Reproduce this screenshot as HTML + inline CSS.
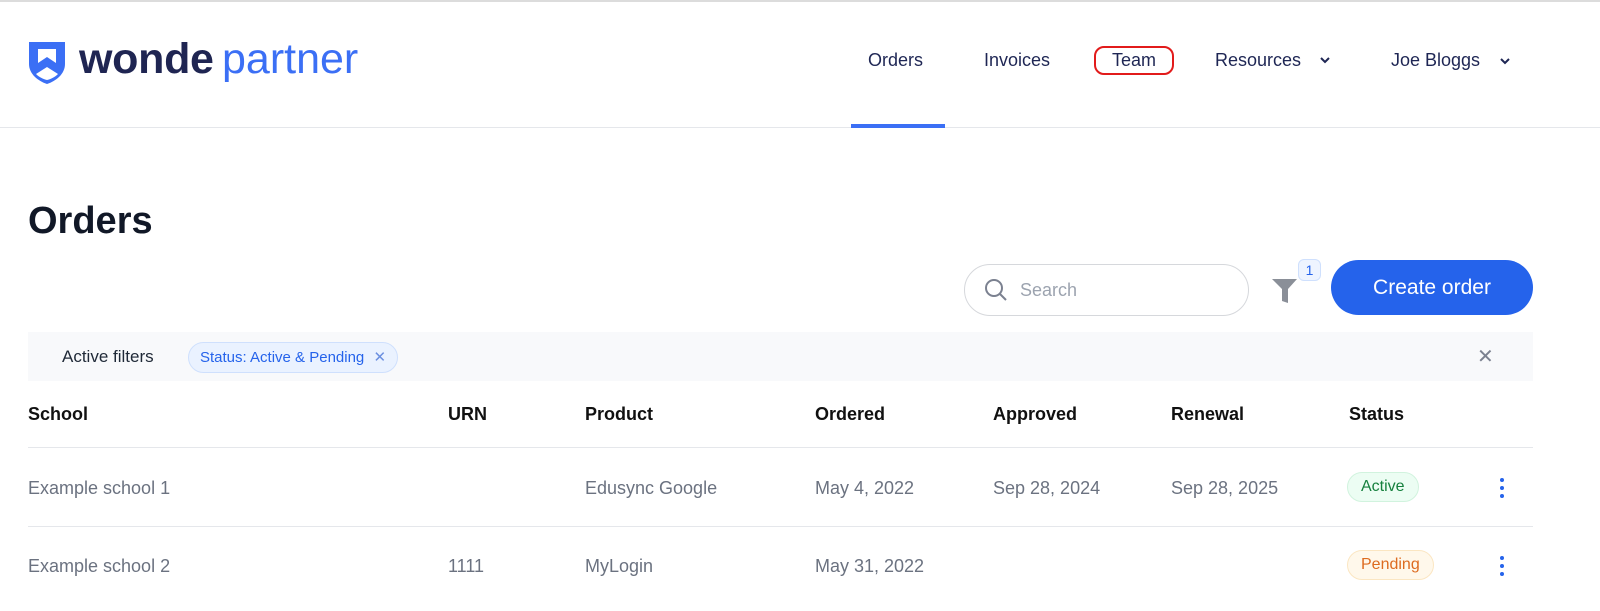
<!DOCTYPE html>
<html><head><style>
*{margin:0;padding:0;box-sizing:border-box}
body{width:1600px;height:611px;overflow:hidden;background:#fff;font-family:"Liberation Sans",sans-serif;position:relative;border-top:2px solid #dcdcdc}
.a{position:absolute}
.nav{font-size:18px;color:#1e2654;top:48px}
.th{top:402px;font-size:18px;font-weight:bold;color:#111}
.td{font-size:18px;color:#6b7280}
.r1{top:476px}.r2{top:554px}
.badge{font-size:16px;border-radius:16px;padding:5px 13px}
.dots{width:4px;height:20px}
.dots i{display:block;width:4px;height:4px;border-radius:2px;background:#2563eb;margin-bottom:4px}
</style></head><body>
<svg class="a" style="left:28px;top:39px" width="38" height="44" viewBox="0 0 38 44"><path d="M1 1h36v22c0 10-9 17-18 20C10 40 1 33 1 23z" fill="#3b6ff5"/><path d="M10 8h18v14l-9-6-9 6z" fill="#fff"/><path d="M8 33l11-7 11 7c-3 3-7 5-11 6-4-1-8-3-11-6z" fill="#fff"/></svg>
<div class="a" style="left:79px;top:33px;font-size:43px;font-weight:bold;color:#1f2552;letter-spacing:-0.3px">wonde</div>
<div class="a" style="left:222px;top:33px;font-size:43px;color:#3b6ff5">partner</div>
<div class="a nav" style="left:868px">Orders</div>
<div class="a nav" style="left:984px">Invoices</div>
<div class="a nav" style="left:1094px;top:44px;border:2px solid #e21b1b;border-radius:10px;padding:2px 16px">Team</div>
<div class="a nav" style="left:1215px">Resources</div>
<svg class="a" style="left:1319px;top:54px" width="12" height="8" viewBox="0 0 12 8" fill="none" stroke="#1e2654" stroke-width="2"><path d="M2 2l4 4 4-4"/></svg>
<div class="a nav" style="left:1391px">Joe Bloggs</div>
<svg class="a" style="left:1499px;top:55px" width="12" height="8" viewBox="0 0 12 8" fill="none" stroke="#1e2654" stroke-width="2"><path d="M2 2l4 4 4-4"/></svg>
<div class="a" style="left:0;top:125px;width:1600px;height:1px;background:#e5e7eb"></div>
<div class="a" style="left:851px;top:122px;width:94px;height:4px;background:#3b6ff5"></div>
<div class="a" style="left:28px;top:198px;font-size:38px;font-weight:bold;color:#111827">Orders</div>
<div class="a" style="left:964px;top:262px;width:285px;height:52px;border:1px solid #d6d8dc;border-radius:26px"></div>
<svg class="a" style="left:984px;top:276px" width="24" height="24" viewBox="0 0 24 24" fill="none" stroke="#7b8190" stroke-width="2"><circle cx="10" cy="10" r="8"/><path d="M16 16l6 6"/></svg>
<div class="a" style="left:1020px;top:278px;font-size:18px;color:#9ca3af">Search</div>
<svg class="a" style="left:1272px;top:276px" width="25" height="26" viewBox="0 0 25 26"><path d="M0 1h25l-9 10v14l-6-2V11z" fill="#8a8f98"/></svg>
<div class="a" style="left:1298px;top:257px;width:23px;height:22px;border:1px solid #cfe0fd;background:#eef4ff;border-radius:6px;font-size:14px;color:#2563eb;text-align:center;line-height:20px">1</div>
<div class="a" style="left:1331px;top:258px;width:202px;height:55px;background:#2563eb;border-radius:28px;color:#fff;font-size:21px;text-align:center;line-height:55px">Create order</div>
<div class="a" style="left:28px;top:330px;width:1505px;height:49px;background:#f8f9fb"></div>
<div class="a" style="left:62px;top:345px;font-size:17px;color:#1f2937">Active filters</div>
<div class="a" style="left:188px;top:340px;height:31px;border:1px solid #cfe0fd;background:#eaf2ff;border-radius:16px;padding:0 11px;font-size:15px;line-height:29px;color:#2563eb">Status: Active &amp; Pending <span style="color:#6b8fe0;margin-left:5px">✕</span></div>
<div class="a" style="left:1477px;top:342px;font-size:20px;color:#7b8190">✕</div>
<div class="a th" style="left:28px">School</div>
<div class="a th" style="left:448px">URN</div>
<div class="a th" style="left:585px">Product</div>
<div class="a th" style="left:815px">Ordered</div>
<div class="a th" style="left:993px">Approved</div>
<div class="a th" style="left:1171px">Renewal</div>
<div class="a th" style="left:1349px">Status</div>
<div class="a" style="left:28px;top:445px;width:1505px;height:1px;background:#e5e7eb"></div>
<div class="a td r1" style="left:28px">Example school 1</div>
<div class="a td r1" style="left:585px">Edusync Google</div>
<div class="a td r1" style="left:815px">May 4, 2022</div>
<div class="a td r1" style="left:993px">Sep 28, 2024</div>
<div class="a td r1" style="left:1171px">Sep 28, 2025</div>
<div class="a badge" style="left:1347px;top:470px;background:#ecfdf3;border:1px solid #d1f3de;color:#15803d">Active</div>
<div class="a dots" style="left:1500px;top:476px"><i></i><i></i><i></i></div>
<div class="a" style="left:28px;top:524px;width:1505px;height:1px;background:#e5e7eb"></div>
<div class="a td r2" style="left:28px">Example school 2</div>
<div class="a td r2" style="left:448px">1111</div>
<div class="a td r2" style="left:585px">MyLogin</div>
<div class="a td r2" style="left:815px">May 31, 2022</div>
<div class="a badge" style="left:1347px;top:548px;background:#fff8eb;border:1px solid #fbe6c2;color:#dd6b20">Pending</div>
<div class="a dots" style="left:1500px;top:554px"><i></i><i></i><i></i></div>
</body></html>
